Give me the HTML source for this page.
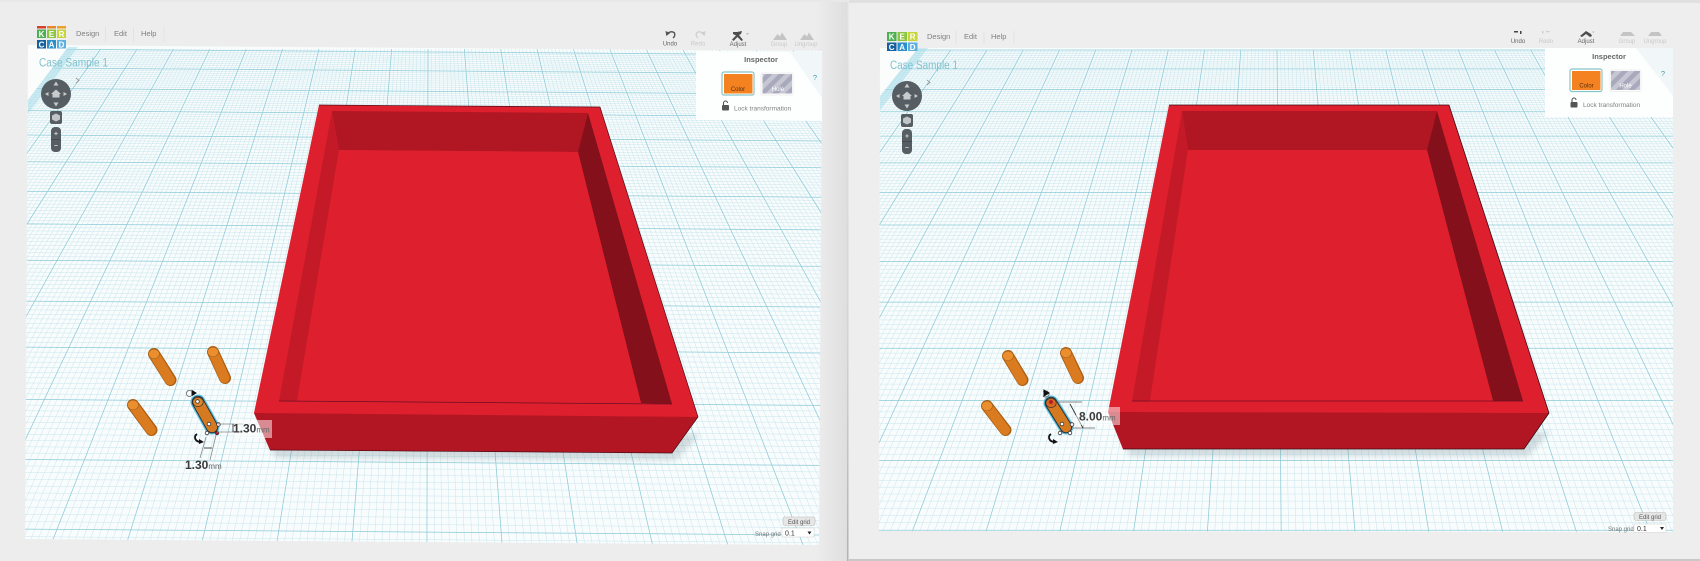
<!DOCTYPE html>
<html><head><meta charset="utf-8"><title>Case Sample 1</title>
<style>
html,body{margin:0;padding:0;background:#eeeded;width:1700px;height:561px;overflow:hidden}
svg{display:block;position:absolute;left:0;top:0;width:1700px;height:561px;overflow:hidden}
text{font-family:"Liberation Sans",sans-serif}
</style></head><body>
<svg xmlns="http://www.w3.org/2000/svg" width="1700" height="561" viewBox="0 0 1700 561">
<defs>
<linearGradient id="shade" x1="0" x2="1" y1="0" y2="0"><stop offset="0" stop-color="#eeeded"/><stop offset="1" stop-color="#dedede"/></linearGradient>
<linearGradient id="edge" x1="0" x2="0" y1="0" y2="1"><stop offset="0" stop-color="#e2e2e2"/><stop offset=".6" stop-color="#d4d4d4"/><stop offset="1" stop-color="#b2b2b2"/></linearGradient>
<pattern id="holeP" width="9" height="9" patternUnits="userSpaceOnUse" patternTransform="rotate(45)"><rect width="9" height="9" fill="#c6c7d3"/><rect width="4.5" height="9" fill="#a8a9bc"/></pattern>
<clipPath id="clipL"><polygon points="28,45 822,51 819,545 25,539"/></clipPath>
<clipPath id="clipR"><polygon points="880,48 1673,48 1673,532 879,531"/></clipPath>
<clipPath id="clipS"><rect width="1700" height="561"/></clipPath>
<filter id="sh" x="-5%" y="-30%" width="110%" height="160%"><feGaussianBlur stdDeviation="3"/></filter>
</defs>
<g clip-path="url(#clipS)">
<!-- pages -->
<rect width="1700" height="561" fill="#eeeded"/>
<rect x="815" y="0" width="33" height="561" fill="url(#shade)"/>
<rect x="848" y="0" width="852" height="561" fill="#efeeee"/>
<rect x="847" y="0" width="1.500" height="561" fill="url(#edge)"/>
<rect x="0" y="0" width="1700" height="2" fill="#e8e8e8"/>
<rect x="849" y="0" width="851" height="3" fill="#e0e0e0"/>
<rect x="849" y="559" width="851" height="2" fill="#c8c8c8"/>

<!-- panels -->
<polygon points="28,45 822,51 819,545 25,539" fill="#f8fcfd"/>
<polygon points="880,48 1673,48 1673,532 879,531" fill="#f8fcfd"/>
<g id="gridL" clip-path="url(#clipL)"></g>
<g id="gridR" clip-path="url(#clipR)"></g>

<!-- corner white and band -->
<g clip-path="url(#clipL)">
<polygon points="20,40 68,40 68,47 28,100 20,110" fill="#fbfcfc"/>
<polygon points="68,47 78,47 28,114 28,100" fill="#a8dcea" opacity=".55"/>
</g>
<g clip-path="url(#clipR)">
<polygon points="870,40 918,40 918,49 880,96 870,110" fill="#fbfcfc"/>
<polygon points="918,48 928,48 880,110 880,96" fill="#a8dcea" opacity=".55"/>
</g>

<!-- LEFT box -->
<polygon points="264,436 700,434 676,460 276,458" fill="#6f8a92" opacity=".28" filter="url(#sh)"/>
<polygon points="319,105 600,107 698,417 672,453 270,450 254,413" fill="#dd1f2e"/>
<polygon points="254,413 698,417 672,453 270,450" fill="#b21622"/>
<polygon points="332,111 588,113 578,152 339,150" fill="#b01722"/>
<polygon points="332,111 339,150 297,401 279,401" fill="#c41a28"/>
<polygon points="588,113 672,404 641,403 578,152" fill="#83101a"/>
<polygon points="339,150 578,152 641,403 297,401" fill="#de1f2e"/>
<polyline points="279,401 672,404" fill="none" stroke="#6d0f25" stroke-width=".8"/>
<polyline points="319,105 600,107 698,417 672,453 270,450" fill="none" stroke="#4a0d18" stroke-width=".7"/>

<!-- RIGHT box -->
<polygon points="1118,434 1550,432 1528,456 1130,456" fill="#6f8a92" opacity=".28" filter="url(#sh)"/>
<polygon points="1169,105 1449,105 1549,413 1524,449 1123,449 1108,412" fill="#dd1f2e"/>
<polygon points="1108,412 1549,413 1524,449 1123,449" fill="#b21622"/>
<polygon points="1182,111 1437,111 1427,150 1188,150" fill="#b01722"/>
<polygon points="1182,111 1188,150 1150,401 1132,401" fill="#c41a28"/>
<polygon points="1437,111 1523,401 1493,401 1427,150" fill="#83101a"/>
<polygon points="1188,150 1427,150 1493,401 1150,401" fill="#de1f2e"/>
<polyline points="1132,401 1523,401" fill="none" stroke="#6d0f25" stroke-width=".8"/>
<polyline points="1169,105 1449,105 1549,413 1524,449 1123,449" fill="none" stroke="#3a0c14" stroke-width=".8"/>

<!-- LEFT cylinders -->
<g stroke-linecap="round" fill="none">
<line x1="154" y1="354" x2="170.500" y2="380" stroke="#a85f16" stroke-width="12"/><line x1="154" y1="354" x2="170" y2="380" stroke="#db7b20" stroke-width="10"/>
<line x1="213" y1="352" x2="225" y2="378" stroke="#a85f16" stroke-width="12"/><line x1="213" y1="352" x2="224.500" y2="378" stroke="#db7b20" stroke-width="10"/>
<line x1="133" y1="405" x2="151.500" y2="430" stroke="#a85f16" stroke-width="12"/><line x1="133" y1="405" x2="151" y2="430" stroke="#db7b20" stroke-width="10"/>
<line x1="198" y1="402" x2="212" y2="427" stroke="#58c0e2" stroke-width="15"/><line x1="198" y1="402" x2="212" y2="427" stroke="#27323a" stroke-width="12.500"/><line x1="198" y1="402" x2="212" y2="427" stroke="#d67a22" stroke-width="10.500"/>
</g>
<ellipse cx="154" cy="354" rx="5.500" ry="4.800" fill="#ea8e2e" stroke="#a8631c" stroke-width=".7"/>
<ellipse cx="213" cy="352" rx="5.500" ry="4.800" fill="#ea8e2e" stroke="#a8631c" stroke-width=".7"/>
<ellipse cx="133" cy="405" rx="5.500" ry="4.800" fill="#ea8e2e" stroke="#a8631c" stroke-width=".7"/>
<ellipse cx="198" cy="402" rx="5.200" ry="4.600" fill="#e28628" stroke="#333" stroke-width=".7"/>

<!-- LEFT handles / dims -->
<g fill="#fff" stroke="#333" stroke-width=".8">
<circle cx="197.500" cy="401.500" r="1.800"/><circle cx="209" cy="424" r="1.800"/><circle cx="218.500" cy="424.500" r="1.800"/><circle cx="207" cy="433" r="1.800"/>
<circle cx="217" cy="433" r="1.800" fill="#b0202a"/>
</g>
<path d="M191 391 a3 3 0 1 0 0 5" fill="none" stroke="#777" stroke-width="1"/>
<path d="M192 390.500 l4 2.500 -4 2.500z" fill="#111" stroke="#111"/>
<path d="M197 434 c-3 2 -3 7 3 8" fill="none" stroke="#111" stroke-width="1.800"/><path d="M199 439 l5 3 -5 2z" fill="#111"/>
<g stroke="#888" stroke-width=".8" fill="none">
<line x1="218" y1="424" x2="243" y2="424"/><line x1="217" y1="432" x2="243" y2="432"/>
<line x1="206" y1="437" x2="200" y2="458"/><line x1="216" y1="435" x2="210" y2="460"/>
</g>
<line x1="233" y1="424" x2="233" y2="432" stroke="#222" stroke-width=".8"/>
<line x1="204" y1="448" x2="212" y2="448" stroke="#222" stroke-width=".8"/>
<rect x="234" y="420" width="38" height="18" fill="#fff" opacity=".5"/>
<text x="233" y="432.500" font-size="12" font-weight="bold" fill="#3a3a3a">1.30<tspan font-size="8" font-weight="normal" fill="#666">mm</tspan></text>
<text x="185" y="469" font-size="12" font-weight="bold" fill="#3a3a3a">1.30<tspan font-size="8" font-weight="normal" fill="#666">mm</tspan></text>

<!-- RIGHT cylinders -->
<g stroke-linecap="round" fill="none">
<line x1="1008" y1="356" x2="1022.500" y2="380" stroke="#a85f16" stroke-width="12"/><line x1="1008" y1="356" x2="1022" y2="380" stroke="#db7b20" stroke-width="10"/>
<line x1="1066" y1="353" x2="1078" y2="378" stroke="#a85f16" stroke-width="12"/><line x1="1066" y1="353" x2="1077.500" y2="378" stroke="#db7b20" stroke-width="10"/>
<line x1="987" y1="406" x2="1005.500" y2="430" stroke="#a85f16" stroke-width="12"/><line x1="987" y1="406" x2="1005" y2="430" stroke="#db7b20" stroke-width="10"/>
<line x1="1051" y1="403" x2="1066" y2="427" stroke="#58c0e2" stroke-width="15"/><line x1="1051" y1="403" x2="1066" y2="427" stroke="#27323a" stroke-width="12.500"/><line x1="1051" y1="403" x2="1066" y2="427" stroke="#d67a22" stroke-width="10.500"/>
</g>
<ellipse cx="1008" cy="356" rx="5.500" ry="4.800" fill="#ea8e2e" stroke="#a8631c" stroke-width=".7"/>
<ellipse cx="1066" cy="353" rx="5.500" ry="4.800" fill="#ea8e2e" stroke="#a8631c" stroke-width=".7"/>
<ellipse cx="987" cy="406" rx="5.500" ry="4.800" fill="#ea8e2e" stroke="#a8631c" stroke-width=".7"/>
<ellipse cx="1051" cy="403" rx="5.200" ry="4.600" fill="#d9691f" stroke="#333" stroke-width=".7"/>
<circle cx="1051" cy="402" r="2" fill="#b0202a"/>

<g fill="#fff" stroke="#333" stroke-width=".8">
<circle cx="1062" cy="424" r="1.800"/><circle cx="1072" cy="424.500" r="1.800"/><circle cx="1060" cy="433" r="1.800"/><circle cx="1070" cy="433" r="1.800"/>
</g>
<path d="M1043 392 a3.500 3 0 1 1 0 4" fill="none" stroke="#777" stroke-width="1"/>
<path d="M1044 390 l5 3 -5 3z" fill="#111" stroke="#111"/>
<path d="M1051 434 c-3 2 -3 7 3 8" fill="none" stroke="#111" stroke-width="1.800"/><path d="M1053 439 l5 3 -5 2z" fill="#111"/>
<g stroke="#888" stroke-width=".9" fill="none">
<line x1="1058" y1="402" x2="1082" y2="402"/><line x1="1072" y1="428" x2="1095" y2="428"/>
</g>
<line x1="1070" y1="404" x2="1083" y2="428" stroke="#222" stroke-width=".8"/>
<rect x="1076" y="407" width="44" height="18" fill="#fff" opacity=".5"/>
<text x="1079" y="420.500" font-size="12" font-weight="bold" fill="#3a3a3a">8.00<tspan font-size="8" font-weight="normal" fill="#666">mm</tspan></text>

<!-- LEFT UI -->
<g>
<rect x="37" y="26" width="9" height="2.500" fill="#d9402b"/><rect x="47" y="26" width="9" height="2.500" fill="#e8862e"/><rect x="57" y="26" width="9" height="2.500" fill="#eda12c"/>
<rect x="37" y="29.500" width="9" height="8.500" fill="#4caf50"/><rect x="47" y="29.500" width="9" height="8.500" fill="#8cc63f"/><rect x="57" y="29.500" width="9" height="8.500" fill="#c6d63a"/>
<rect x="37" y="40" width="9" height="8.500" fill="#15619f"/><rect x="47" y="40" width="9" height="8.500" fill="#2b8fcb"/><rect x="57" y="40" width="9" height="8.500" fill="#5cb0df"/>
<g font-size="8" font-weight="bold" fill="#fff" text-anchor="middle">
<text x="41.500" y="36.800">K</text><text x="51.500" y="36.800">E</text><text x="61.500" y="36.800">R</text>
<text x="41.500" y="47.300">C</text><text x="51.500" y="47.300">A</text><text x="61.500" y="47.300">D</text></g>
<g font-size="7.500" fill="#808080"><text x="76" y="36">Design</text><text x="114" y="36">Edit</text><text x="141" y="36">Help</text></g>
<g stroke="#e2e2e2" stroke-width="1"><line x1="105.500" y1="27" x2="105.500" y2="42"/><line x1="133.500" y1="27" x2="133.500" y2="42"/><line x1="164" y1="27" x2="164" y2="42"/></g>
<text x="39" y="66.500" font-size="11.500" fill="#7fc2cf" textLength="69" lengthAdjust="spacingAndGlyphs">Case Sample 1</text>
<path d="M76 78 l3 2.500 -3 2.500" fill="none" stroke="#888" stroke-width=".8"/>
<circle cx="56" cy="94" r="15" fill="#575e63"/>
<g fill="#c7cbcd"><path d="M56 81.500 l2.500 4 h-5z"/><path d="M56 106.500 l2.500 -4 h-5z"/><path d="M45 94 l3.500 -2 v4z"/><path d="M67 94 l-3.500 -2 v4z"/>
<path d="M56 89.500 l5 4.500 h-1.500 v3.500 h-7 v-3.500 h-1.500z"/></g>
<rect x="50" y="111" width="12" height="13" rx="2" fill="#575e63"/><path d="M56 113.500 l4 2 v4 l-4 2 -4 -2 v-4z" fill="#c2c5c7"/>
<rect x="51" y="127" width="10" height="25" rx="4" fill="#575e63"/>
<rect x="51" y="139" width="10" height=".7" fill="#3d4347"/>
<g fill="#c7cbcd"><rect x="54.300" y="133" width="3.400" height=".9"/><rect x="55.500" y="131.800" width="1" height="3.400"/><rect x="54.300" y="145" width="3.400" height=".9"/></g>

<!-- toolbar left -->
<path d="M668 33 q4 -2.500 6.500 0 q1 3 -1.500 5" fill="none" stroke="#555" stroke-width="1.400"/><path d="M665.500 31 l.8 5 4 -3z" fill="#555"/>
<path d="M703 33 q-4 -2.500 -6.500 0 q-1 3 1.500 5" fill="none" stroke="#cfcfcf" stroke-width="1.300"/><path d="M705.500 31 l-.8 5 -4 -3z" fill="#cfcfcf"/>
<path d="M733 32 h4 l5 -1 -1 3 -2 1 4 5 -1.500 1 -4 -4 -4 4 -1.500 -1.500 4 -4 -3 -1.500z" fill="#4d4d4d"/>
<path d="M746 33 h3 l-1.500 2z" fill="#bbb"/>
<g fill="#c4c4c4"><path d="M773 40 l4.500 -6 2.500 2.500 2 -4 5 7.500z"/><path d="M800 40 l4.500 -6 2.500 2.500 2 -4 5 7.500z"/></g>
<g font-size="6" text-anchor="middle"><text x="670" y="45.500" fill="#666">Undo</text><text x="698" y="45.500" fill="#c8c8c8">Redo</text><text x="738" y="46" fill="#666">Adjust</text><text x="779" y="46" fill="#c8c8c8">Group</text><text x="806" y="46" fill="#c8c8c8">Ungroup</text></g>

<!-- inspector left -->
<polygon points="696,51 822,52 822,121 696,120" fill="#fdfefe"/>
<polygon points="790,52 822,52 822,98" fill="#f1f7f9"/>
<text x="761" y="62" font-size="7.500" font-weight="bold" fill="#666" text-anchor="middle">Inspector</text>
<rect x="722" y="72" width="32" height="23" rx="2" fill="#fff" stroke="#86c5c8" stroke-width="1.200"/>
<rect x="724" y="74" width="28.500" height="19.500" fill="#f58220"/>
<text x="738" y="91" font-size="6" fill="#5a3010" text-anchor="middle">Color</text>
<rect x="761" y="73" width="32" height="22" rx="2" fill="#fff" stroke="#eee"/>
<rect x="762.500" y="74" width="29.500" height="19.500" fill="url(#holeP)"/>
<text x="778" y="91" font-size="6" fill="#fff" text-anchor="middle">Hole</text>
<text x="815" y="80" font-size="7.500" fill="#3a9aa8" text-anchor="middle">?</text>
<rect x="722" y="105" width="7" height="5.500" rx="1" fill="#555"/><path d="M723.500 105 v-2 a2 2 0 0 1 4 0" fill="none" stroke="#555" stroke-width="1.100"/>
<text x="734" y="110.500" font-size="6.500" fill="#808080">Lock transformation</text>
<!-- bottom left -->
<rect x="783" y="517" width="32" height="8.500" rx="2" fill="#e6e6e6" stroke="#bbb" stroke-width=".6"/>
<text x="799" y="524" font-size="6" fill="#555" text-anchor="middle">Edit grid</text>
<text x="755" y="536" font-size="6" fill="#777">Snap grid</text>
<rect x="782" y="528" width="32" height="9" fill="#fff" stroke="#ccc" stroke-width=".5"/>
<text x="785" y="535.500" font-size="7" fill="#333">0.1</text><path d="M807.500 531.500 h4 l-2 3z" fill="#222"/>
</g>

<!-- RIGHT UI -->
<g>
<rect x="887" y="32" width="9.500" height="9" fill="#4caf50"/><rect x="897.500" y="32" width="9.500" height="9" fill="#8cc63f"/><rect x="908" y="32" width="9.500" height="9" fill="#c6d63a"/>
<rect x="887" y="42.500" width="9.500" height="8.500" fill="#15619f"/><rect x="897.500" y="42.500" width="9.500" height="8.500" fill="#2b8fcb"/><rect x="908" y="42.500" width="9.500" height="8.500" fill="#5cb0df"/>
<g font-size="8" font-weight="bold" fill="#fff" text-anchor="middle">
<text x="891.700" y="39.500">K</text><text x="902.200" y="39.500">E</text><text x="912.700" y="39.500">R</text>
<text x="891.700" y="50">C</text><text x="902.200" y="50">A</text><text x="912.700" y="50">D</text></g>
<g font-size="7.500" fill="#808080"><text x="927" y="39">Design</text><text x="964" y="39">Edit</text><text x="991" y="39">Help</text></g>
<g stroke="#e2e2e2" stroke-width="1"><line x1="956" y1="31" x2="956" y2="44"/><line x1="984" y1="31" x2="984" y2="44"/><line x1="1014" y1="31" x2="1014" y2="44"/></g>
<text x="890" y="69" font-size="11.500" fill="#7fc2cf" textLength="68" lengthAdjust="spacingAndGlyphs">Case Sample 1</text>
<path d="M927 80 l3 2.500 -3 2.500" fill="none" stroke="#888" stroke-width=".8"/>
<circle cx="907" cy="96" r="15" fill="#575e63"/>
<g fill="#c7cbcd"><path d="M907 83.500 l2.500 4 h-5z"/><path d="M907 108.500 l2.500 -4 h-5z"/><path d="M896 96 l3.500 -2 v4z"/><path d="M918 96 l-3.500 -2 v4z"/>
<path d="M907 91.500 l5 4.500 h-1.500 v3.500 h-7 v-3.500 h-1.500z"/></g>
<rect x="901" y="114" width="12" height="13" rx="2" fill="#575e63"/><path d="M907 116.500 l4 2 v4 l-4 2 -4 -2 v-4z" fill="#c2c5c7"/>
<rect x="902" y="129" width="10" height="25" rx="4" fill="#575e63"/>
<rect x="902" y="141" width="10" height=".7" fill="#3d4347"/>
<g fill="#c7cbcd"><rect x="905.300" y="135.500" width="3.400" height=".9"/><rect x="906.500" y="134.300" width="1" height="3.400"/><rect x="905.300" y="147" width="3.400" height=".9"/></g>

<!-- toolbar right -->
<rect x="1514" y="31" width="4" height="1.500" fill="#444"/><rect x="1520" y="31" width="1.500" height="3" fill="#444"/>
<rect x="1542" y="31" width="1.500" height="2.500" fill="#cfcfcf"/><rect x="1546" y="31" width="3.500" height="1.300" fill="#cfcfcf"/>
<path d="M1580 36 l6 -5 5 3 1 2 -2 1 -4 -3 -4 3z" fill="#4d4d4d"/>
<path d="M1592 31.500 h2.500 l-1.200 1.700z" fill="#bbb"/>
<g fill="#c4c4c4"><path d="M1620 36 l3 -4 h8 l4 4z"/><path d="M1648 36 l3 -4 h8 l3 4z"/></g>
<g font-size="6" text-anchor="middle"><text x="1518" y="43" fill="#666">Undo</text><text x="1546" y="43" fill="#c8c8c8">Redo</text><text x="1586" y="43" fill="#666">Adjust</text><text x="1627" y="43" fill="#c8c8c8">Group</text><text x="1655" y="43" fill="#c8c8c8">Ungroup</text></g>

<!-- inspector right -->
<polygon points="1545,48 1673,48 1673,117 1545,117" fill="#fdfefe"/>
<polygon points="1636,48 1673,48 1673,96" fill="#f1f7f9"/>
<text x="1609" y="59" font-size="7.500" font-weight="bold" fill="#666" text-anchor="middle">Inspector</text>
<rect x="1570" y="69" width="32" height="22.500" rx="2" fill="#fff" stroke="#86c5c8" stroke-width="1.200"/>
<rect x="1572" y="71" width="28.500" height="19" fill="#f58220"/>
<text x="1586.500" y="87.500" font-size="6" fill="#5a3010" text-anchor="middle">Color</text>
<rect x="1610" y="70" width="31" height="21.500" rx="2" fill="#fff" stroke="#eee"/>
<rect x="1611" y="71" width="29" height="19" fill="url(#holeP)"/>
<text x="1625.500" y="87.500" font-size="6" fill="#fff" text-anchor="middle">Hole</text>
<text x="1663" y="76" font-size="7.500" fill="#3a9aa8" text-anchor="middle">?</text>
<rect x="1570.500" y="102" width="7" height="5.500" rx="1" fill="#555"/><path d="M1572 102 v-2 a2 2 0 0 1 4 0" fill="none" stroke="#555" stroke-width="1.100"/>
<text x="1583" y="107" font-size="6.500" fill="#808080">Lock transformation</text>
<!-- bottom right -->
<rect x="1634" y="512.500" width="32" height="8" rx="2" fill="#e6e6e6" stroke="#bbb" stroke-width=".6"/>
<text x="1650" y="519" font-size="6" fill="#555" text-anchor="middle">Edit grid</text>
<text x="1608" y="531" font-size="6" fill="#777">Snap grid</text>
<rect x="1634" y="524" width="32" height="8.500" fill="#fff" stroke="#ccc" stroke-width=".5"/>
<text x="1637" y="531.200" font-size="7" fill="#333">0.1</text><path d="M1660 527 h4 l-2 3z" fill="#222"/>
</g>
</g>
</svg>
<script>
(function(){
var NS="http://www.w3.org/2000/svg";
function build(id,o){
  var g=document.getElementById(id),minor="",major="";
  var yv=o.yv,xv=o.xv;
  function yAt(t){return 1/(0.002155-0.0000843*t)+yv;}
  var h0=yAt(0);
  var xa=o.xl,xb=o.xr,yEnd=o.ye;
  for(var i=0;i<=150;i++){
    var t=i/10,y=yAt(t)+o.dy;
    if(y>yEnd)break;
    var y1=y+o.s*(xa-o.px),y2=y+o.s*(xb-o.px);
    var s="M"+xa+" "+y1.toFixed(2)+"L"+xb+" "+y2.toFixed(2);
    if(i%10==0)major+=s;else minor+=s;
  }
  var span=(yEnd-yv)/(o.ty-yv);
  for(var j=-60;j<=400;j++){
    var xt=o.t0+o.sp*j/10;
    var xTop=xv+(xt-xv)*(h0+o.dy-yv)/(o.ty-yv);
    var xBot=xv+(xt-xv)*span;
    if(Math.min(xTop,xBot)>xb)continue;
    var s2="M"+xTop.toFixed(2)+" "+(h0+o.dy).toFixed(1)+"L"+xBot.toFixed(2)+" "+yEnd;
    if(((j%10)+10)%10==0)major+=s2;else minor+=s2;
  }
  var a=document.createElementNS(NS,"path");a.setAttribute("d",minor);a.setAttribute("stroke","#c8e5eb");a.setAttribute("stroke-width",".5");a.setAttribute("fill","none");g.appendChild(a);
  var b=document.createElementNS(NS,"path");b.setAttribute("d",major);b.setAttribute("stroke","#8ccad7");b.setAttribute("stroke-width",".75");b.setAttribute("fill","none");g.appendChild(b);
}
build("gridL",{xv:429,yv:-415,dy:0,s:.0075,px:40,t0:66,sp:36.2,ty:47,xl:24,xr:823,ye:546});
build("gridR",{xv:1273,yv:-415,dy:1,s:0,px:900,t0:916,sp:36.1,ty:48,xl:878,xr:1674,ye:533});
})();
</script>
</body></html>
